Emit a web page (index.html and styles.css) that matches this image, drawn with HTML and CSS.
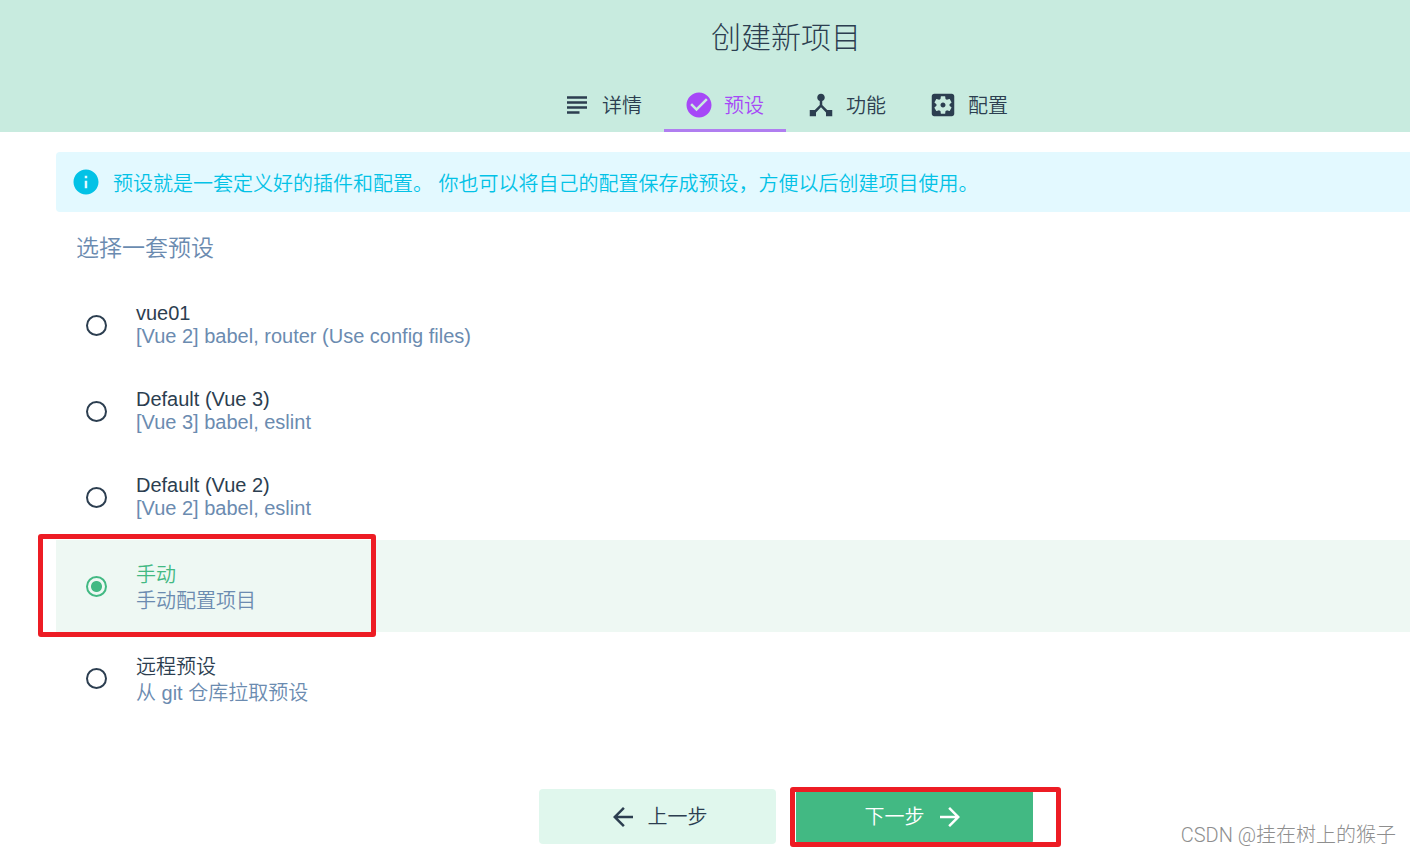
FILE: index.html
```
<!DOCTYPE html>
<html lang="zh-CN">
<head>
    <meta charset="UTF-8">
    <meta name="viewport" content="width=device-width, initial-scale=1.0">
    <title>创建新项目</title>
    <link rel="stylesheet" href="styles.css">
</head>
<body>
<header class="header">
    <h1>创建新项目</h1>
    <nav class="tabs">
        <button type="button" class="tab">
            <svg class="icon" viewBox="0 0 24 24"><path d="M14 17H4v2h10v-2zm6-8H4v2h16V9zM4 15h16v-2H4v2zM4 5v2h16V5H4z"/></svg>
            <span>详情</span>
        </button>
        <button type="button" class="tab active">
            <svg class="icon" viewBox="0 0 24 24"><path d="M12 2C6.48 2 2 6.48 2 12s4.48 10 10 10 10-4.48 10-10S17.52 2 12 2zm-2 15l-5-5 1.41-1.41L10 14.17l7.59-7.59L19 8l-9 9z"/></svg>
            <span>预设</span>
        </button>
        <button type="button" class="tab">
            <svg class="icon" viewBox="0 0 24 24"><path d="M17 16l-4-4V8.82C14.16 8.4 15 7.3 15 6c0-1.66-1.34-3-3-3S9 4.34 9 6c0 1.3.84 2.4 2 2.82V12l-4 4H3v5h5v-3.05l4-4.2 4 4.2V21h5v-5h-4z"/></svg>
            <span>功能</span>
        </button>
        <button type="button" class="tab">
            <svg class="icon" viewBox="0 0 24 24"><path d="M12 10c-1.1 0-2 .9-2 2s.9 2 2 2 2-.9 2-2-.9-2-2-2zm7-7H5c-1.11 0-2 .9-2 2v14c0 1.1.89 2 2 2h14c1.11 0 2-.9 2-2V5c0-1.1-.89-2-2-2zm-1.75 9c0 .23-.02.46-.05.68l1.48 1.16c.13.11.17.3.08.45l-1.4 2.42c-.09.15-.27.21-.43.15l-1.74-.7c-.36.28-.76.51-1.18.69l-.26 1.85c-.03.17-.18.3-.35.3h-2.8c-.17 0-.32-.13-.35-.29l-.26-1.85c-.43-.18-.82-.41-1.18-.69l-1.74.7c-.16.06-.34 0-.43-.15l-1.4-2.42c-.09-.15-.05-.34.08-.45l1.48-1.16c-.03-.23-.05-.46-.05-.69 0-.23.02-.46.05-.68l-1.48-1.16c-.13-.11-.17-.3-.08-.45l1.4-2.42c.09-.15.27-.21.43-.15l1.74.7c.36-.28.76-.51 1.18-.69l.26-1.85c.03-.17.18-.3.35-.3h2.8c.17 0 .32.13.35.29l.26 1.85c.43.18.82.41 1.18.69l1.74-.7c.16-.06.34 0 .43.15l1.4 2.42c.09.15.05.34-.08.45l-1.48 1.16c.03.23.05.46.05.69z"/></svg>
            <span>配置</span>
        </button>
    </nav>
</header>

<main class="content">
    <div class="info">
        <svg class="icon" viewBox="0 0 24 24"><path d="M12 2C6.48 2 2 6.48 2 12s4.48 10 10 10 10-4.48 10-10S17.52 2 12 2zm1 15h-2v-6h2v6zm0-8h-2V7h2v2z"/></svg>
        <p>预设就是一套定义好的插件和配置。 你也可以将自己的配置保存成预设，方便以后创建项目使用。</p>
    </div>

    <h2>选择一套预设</h2>

    <div class="presets">
        <label class="preset">
            <input type="radio" name="preset">
            <span class="preset-text">
                <span class="name">vue01</span>
                <span class="desc">[Vue 2] babel, router (Use config files)</span>
            </span>
        </label>
        <label class="preset">
            <input type="radio" name="preset">
            <span class="preset-text">
                <span class="name">Default (Vue 3)</span>
                <span class="desc">[Vue 3] babel, eslint</span>
            </span>
        </label>
        <label class="preset">
            <input type="radio" name="preset">
            <span class="preset-text">
                <span class="name">Default (Vue 2)</span>
                <span class="desc">[Vue 2] babel, eslint</span>
            </span>
        </label>
        <label class="preset tall selected">
            <input type="radio" name="preset" checked>
            <span class="preset-text">
                <span class="name">手动</span>
                <span class="desc">手动配置项目</span>
            </span>
            <span class="mark mark-preset"></span>
        </label>
        <label class="preset tall">
            <input type="radio" name="preset">
            <span class="preset-text">
                <span class="name">远程预设</span>
                <span class="desc">从 git 仓库拉取预设</span>
            </span>
        </label>
    </div>
</main>

<footer class="actions">
    <button type="button" class="btn">
        <svg class="icon" viewBox="0 0 24 24"><path d="M20 11H7.83l5.59-5.59L12 4l-8 8 8 8 1.41-1.41L7.83 13H20v-2z"/></svg>
        <span>上一步</span>
    </button>
    <div class="next">
        <button type="button" class="btn primary">
            <span>下一步</span>
            <svg class="icon" viewBox="0 0 24 24"><path d="M12 4l-1.41 1.41L16.17 11H4v2h12.17l-5.58 5.59L12 20l8-8z"/></svg>
        </button>
        <span class="mark mark-next"></span>
    </div>
</footer>
<div class="watermark">CSDN @挂在树上的猴子</div>
</body>
</html>
```
FILE: styles.css
```
:root{
    --text:#2c3e50; --muted:#6b8bb0; --green:#42b983; --purple:#a648f7;
    --info:#03c2e6; --mark:#ed1c24;
}
*{box-sizing:border-box;}
body{
    margin:0; min-height:100vh; display:flex; flex-direction:column;
    position:relative; overflow-x:hidden;
    font-family:"Liberation Sans", Arial, "Noto Sans CJK SC", sans-serif;
    font-size:20px; font-weight:350; line-height:26px;
    color:var(--text); background:#fff;
}
h1,h2,p{margin:0;font-weight:inherit;}
button{font:inherit;color:inherit;border:none;background:none;cursor:pointer;}
.icon{width:30px;height:30px;flex:none;fill:currentColor;}

.header{
    display:flex; flex-direction:column; align-items:center;
    padding-left:162px; background:#c8ebdf;
}
.header h1{font-size:30px;font-weight:300;line-height:38px;padding:19px 0 21px;}
.tabs{display:flex;}
.tab{
    display:flex; align-items:center; gap:10px; height:54px;
    padding:0 22px 0 20px;
}
.tab span{padding-top:2px;}
.tab.active{color:var(--purple);box-shadow:inset 0 -3px #b07ef0;}

.content{padding:20px 0 0 56px;}
.info{
    display:flex; align-items:center; gap:12px; height:60px;
    padding:0 15px; border-radius:4px 0 0 4px;
    background:#e3f9ff; color:var(--info);
}
.info p{padding-top:4px;}
h2{font-size:23px;line-height:30px;padding:21px 20px 19px;color:var(--muted);}

.preset{
    display:flex; align-items:center; gap:29px;
    padding:20px 30px; line-height:23px; position:relative; cursor:pointer;
}
.preset.tall{line-height:26px;padding:18px 30px;}
.tall .preset-text{padding-top:4px;}
.preset.selected{background:#eef8f3;}
.preset input{
    appearance:none; width:21px; height:21px; margin:0; flex:none;
    border:2px solid var(--text); border-radius:50%;
}
.preset input:checked{
    border-color:var(--green);
    background:radial-gradient(circle, var(--green) 5px, transparent 6px);
}
.preset-text{display:flex;flex-direction:column;}
.desc{color:var(--muted);}
.selected .name{color:var(--green);}

.actions{
    display:flex; justify-content:center; gap:20px;
    margin-top:auto; padding:20px 0 9px 162px;
}
.btn{
    display:flex; align-items:center; justify-content:center; gap:10px;
    width:237px; height:55px; padding:0; border-radius:4px; background:#e0f7ed;
}
.btn.primary{background:var(--green);color:#fff;}
.next{position:relative;}

/* red highlight frames */
.mark{position:absolute;border:5px solid var(--mark);border-radius:3px;pointer-events:none;}
.mark-preset{left:-18px;top:-6px;width:338px;height:103px;}
.mark-next{left:-6px;top:-2px;width:271px;height:60px;}

.watermark{
    position:absolute; right:14px; bottom:5px; color:#8e8e8e;
    font-family:Roboto, "Noto Sans CJK SC", sans-serif; font-weight:300;
}

@media(max-width:900px){
    .header,.actions{padding-left:0;}
    .tab{padding:0 10px;}
    .content{padding-left:20px;}
}
```
